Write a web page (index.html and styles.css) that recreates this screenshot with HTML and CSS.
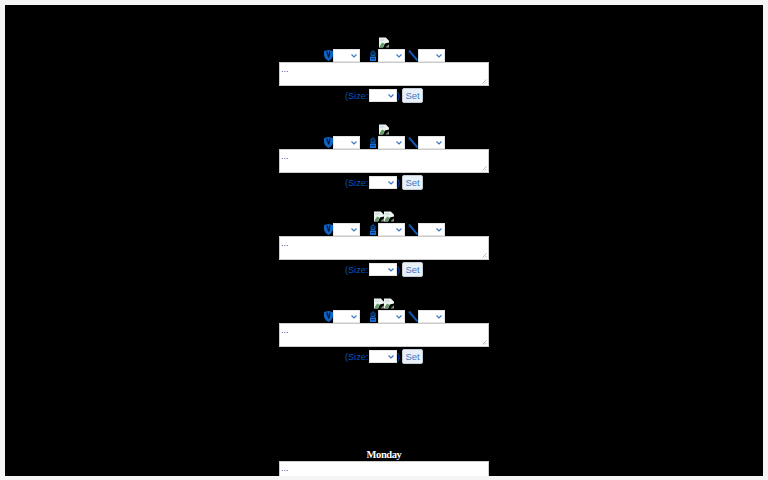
FILE: index.html
```html
<!DOCTYPE html>
<html lang="en">
<head>
<meta charset="utf-8">
<title>Schedule</title>
<link rel="stylesheet" href="styles.css">
</head>
<body>
<svg class="defs" width="0" height="0" aria-hidden="true">
  <defs>
    <symbol id="broken" viewBox="0 0 11 11">
      <path d="M0 0H7.500L11 3.500V5.500L6.500 6.500L4.500 11H0Z" fill="#eef3ee"/>
      <path d="M1 9L3.500 5.500L6 7L4.500 10.500H1Z" fill="#5f9e5f"/>
      <path d="M1 1.500H6V4H1Z" fill="#d4e2f0"/>
      <path d="M7.500 10.500L11 7.500V11H7.500Z" fill="#7f9a7f"/>
    </symbol>
    <symbol id="shield" viewBox="0 0 9 11">
      <path d="M0 1L4.5 0L9 1V5C9 8 6.5 10 4.5 11C2.500 10 0 8 0 5Z" fill="#0f63c4"/>
      <path d="M2.800 1.500L4.800 7.500L5.800 1.500" fill="none" stroke="#001a3a" stroke-width="1.200"/>
    </symbol>
    <symbol id="bullet" viewBox="0 0 6 11">
      <path d="M1 5.500V2.500L3 0.500L5 2.500V5.500Z" fill="#06294f" stroke="#0d5ab5" stroke-width="1"/>
      <path d="M0 6.500H6V11H0Z" fill="#1470d8"/>
      <path d="M1 8.200H5V9.200H1Z" fill="#06294f"/>
    </symbol>
    <symbol id="sword" viewBox="0 0 10 11">
      <path d="M1 0.500L9.500 10.500" stroke="#0d5ab5" stroke-width="2" fill="none"/>
      <path d="M0.500 3.500L3.500 1" stroke="#0a3f80" stroke-width="0.800" fill="none"/>
    </symbol>
  </defs>
</svg>
<main class="screen">
  <section class="entry">
    <div class="pics"><svg class="pic"><use href="#broken"/></svg></div>
    <div class="gear">
      <svg class="ico shield"><use href="#shield"/></svg><select class="pick"><option></option></select>
      <svg class="ico bullet"><use href="#bullet"/></svg><select class="pick"><option></option></select>
      <svg class="ico sword"><use href="#sword"/></svg><select class="pick"><option></option></select>
    </div>
    <textarea class="note">...</textarea>
    <div class="size"><span class="size-label">(Size:</span><select class="pick small"><option></option></select><span>)</span><button class="set" type="button">Set</button></div>
  </section>
  <section class="entry">
    <div class="pics"><svg class="pic"><use href="#broken"/></svg></div>
    <div class="gear">
      <svg class="ico shield"><use href="#shield"/></svg><select class="pick"><option></option></select>
      <svg class="ico bullet"><use href="#bullet"/></svg><select class="pick"><option></option></select>
      <svg class="ico sword"><use href="#sword"/></svg><select class="pick"><option></option></select>
    </div>
    <textarea class="note">...</textarea>
    <div class="size"><span class="size-label">(Size:</span><select class="pick small"><option></option></select><span>)</span><button class="set" type="button">Set</button></div>
  </section>
  <section class="entry">
    <div class="pics"><svg class="pic"><use href="#broken"/></svg><svg class="pic"><use href="#broken"/></svg></div>
    <div class="gear">
      <svg class="ico shield"><use href="#shield"/></svg><select class="pick"><option></option></select>
      <svg class="ico bullet"><use href="#bullet"/></svg><select class="pick"><option></option></select>
      <svg class="ico sword"><use href="#sword"/></svg><select class="pick"><option></option></select>
    </div>
    <textarea class="note">...</textarea>
    <div class="size"><span class="size-label">(Size:</span><select class="pick small"><option></option></select><span>)</span><button class="set" type="button">Set</button></div>
  </section>
  <section class="entry">
    <div class="pics"><svg class="pic"><use href="#broken"/></svg><svg class="pic"><use href="#broken"/></svg></div>
    <div class="gear">
      <svg class="ico shield"><use href="#shield"/></svg><select class="pick"><option></option></select>
      <svg class="ico bullet"><use href="#bullet"/></svg><select class="pick"><option></option></select>
      <svg class="ico sword"><use href="#sword"/></svg><select class="pick"><option></option></select>
    </div>
    <textarea class="note">...</textarea>
    <div class="size"><span class="size-label">(Size:</span><select class="pick small"><option></option></select><span>)</span><button class="set" type="button">Set</button></div>
  </section>
  <section class="day">
    <h2 class="day-name">Monday</h2>
    <textarea class="note">...</textarea>
  </section>
</main>
</body>
</html>
```
FILE: styles.css
```css
html, body {
  margin: 0;
  height: 480px;
  overflow: hidden;
  background: #f5f5f5;
}
.defs {
  position: absolute;
}
.screen {
  box-sizing: border-box;
  height: 471px;
  margin: 5px;
  padding-top: 32px;
  overflow: hidden;
  background: #000;
  display: flex;
  flex-direction: column;
  align-items: center;
  font-family: "Liberation Sans", Arial, sans-serif;
  font-size: 9.5px;
  color: #0a56b0;
}
.entry {
  width: 210px;
  height: 87px;
  flex: none;
  display: flex;
  flex-direction: column;
  align-items: center;
}
.pics {
  height: 12px;
  display: flex;
  justify-content: center;
}
.pic {
  width: 10px;
  height: 11px;
}
.gear {
  height: 13px;
  display: flex;
  align-items: center;
  justify-content: center;
}
.ico {
  flex: none;
}
.shield {
  width: 9px;
  height: 11px;
}
.bullet {
  width: 6px;
  height: 11px;
  margin-left: 10px;
  margin-right: 2px;
}
.sword {
  width: 10px;
  height: 11px;
  margin-left: 3px;
}
.pick {
  box-sizing: border-box;
  width: 27px;
  height: 13px;
  padding: 0;
  border: 1px solid #e4e4e4;
  border-radius: 0;
  appearance: none;
  background-color: #fff;
  background-image: url("data:image/svg+xml,%3Csvg xmlns='http://www.w3.org/2000/svg' width='6' height='4'%3E%3Cpath d='M0.500 0.500L3 3L5.500 0.500' fill='none' stroke='%233f78c4' stroke-width='1.200'/%3E%3C/svg%3E");
  background-repeat: no-repeat;
  background-position: right 2px center;
  color: #0a56b0;
  font-size: 8px;
  font-family: inherit;
}
.note {
  box-sizing: border-box;
  display: block;
  flex: none;
  width: 210px;
  height: 24px;
  margin: 0;
  padding: 1px;
  border: 1px solid #ccc;
  border-radius: 0;
  resize: none;
  background-color: #fff;
  background-image: url("data:image/svg+xml,%3Csvg xmlns='http://www.w3.org/2000/svg' width='5' height='5'%3E%3Cpath d='M0.500 4.500L4.500 0.500M3 4.500L4.500 3' fill='none' stroke='%23999' stroke-width='0.700'/%3E%3C/svg%3E");
  background-repeat: no-repeat;
  background-position: right 1px bottom 1px;
  color: #0a56b0;
  font-family: "Liberation Sans", Arial, sans-serif;
  font-size: 9px;
  line-height: 11px;
}
.size {
  height: 15px;
  margin-top: 2px;
  display: flex;
  align-items: center;
  justify-content: center;
}
.size-label {
  width: 24px;
  font-size: 9.2px;
  white-space: nowrap;
}
.small {
  width: 28px;
}
.set {
  box-sizing: border-box;
  width: 21px;
  height: 15px;
  margin-left: 2px;
  padding: 0;
  border: 1px solid #c4ccd6;
  border-radius: 2px;
  background: #eaf0f8;
  color: #3f78c4;
  font-family: inherit;
  font-size: 9.5px;
}
.day {
  width: 210px;
  margin-top: 63px;
  flex: none;
  display: flex;
  flex-direction: column;
  align-items: center;
}
.day-name {
  height: 12px;
  margin: 0;
  padding-top: 1px;
  color: #fff;
  font-family: "Liberation Serif", "Times New Roman", serif;
  font-size: 10.500px;
  line-height: 12px;
  letter-spacing: -0.400px;
  font-weight: bold;
}
```
